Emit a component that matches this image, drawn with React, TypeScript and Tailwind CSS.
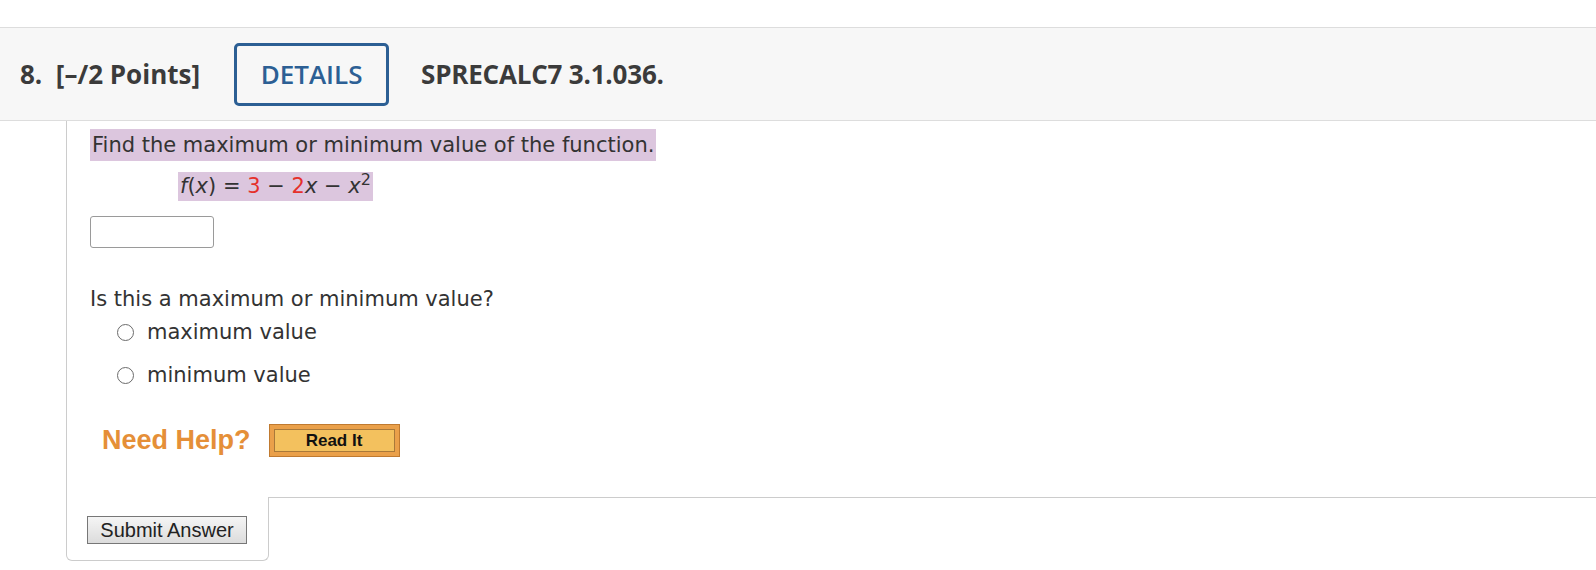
const Radio = ({ label }: { label: string }) => (
  <label className="flex h-[43px] items-center pl-[27px]">
    <span className="h-[17px] w-[17px] shrink-0 rounded-full border-[1.5px] border-[#6b6b6b] bg-white" />
    <span className="ml-[13px]">{label}</span>
  </label>
)

const App = () => {
  return (
    <div className="min-h-[570px] w-full bg-white font-['DejaVu_Sans',sans-serif] text-[21px] text-[#333333]">
      <div className="h-[27px]" />

      <div className="flex h-[94px] items-center border-y border-[#dddddd] bg-[#f7f7f7] pl-[20px] font-['Open_Sans',sans-serif] text-[26px] font-bold text-[#3b3b3b]">
        <span>8.{'\u00a0'} [–/2 Points]</span>
        <button className="ml-[34px] mr-[32px] flex h-[63px] w-[155px] items-center justify-center rounded-[5px] border-[3px] border-[#2c5f94] font-semibold text-[#2c5f94]">
          DETAILS
        </button>
        <span className="tracking-[-0.2px]">SPRECALC7 3.1.036.</span>
      </div>

      <div className="ml-[66px]">
        <div className="border-l border-[#cccccc] pb-[36px] pl-[23px] pt-[8px]">
          <div>
            <span className="inline-block bg-[#dcc6de] px-[2px] leading-[32px]">
              Find the maximum or minimum value of the function.
            </span>
          </div>
          <div className="mt-[9px] pl-[88px]">
            <span className="inline-block bg-[#dcc6de] px-[2px] leading-[29px]">
              <i>f</i>(<i>x</i>) = <span className="text-[#e5302b]">3</span> − <span className="text-[#e5302b]">2</span>
              <i>x</i> − <i>x</i>
              <sup className="text-[16px]">2</sup>
            </span>
          </div>
          <div className="mt-[14px] h-[32px] w-[124px] rounded-[3px] border border-[#9a9a9a] bg-white" />

          <div className="mt-[39px] leading-[24px]">Is this a maximum or minimum value?</div>
          <Radio label="maximum value" />
          <Radio label="minimum value" />

          <div className="mt-[23px] flex items-center pl-[12px]">
            <span className="font-['Liberation_Sans',sans-serif] text-[27px] font-bold text-[#e58f38]">Need Help?</span>
            <button className="ml-[18px] h-[33px] w-[131px] border border-[#c07a30] bg-[#eaa04a] p-[4px]">
              <span className="flex h-full w-full items-center justify-center border border-[#a9793a] bg-[#f3c15e] font-['Liberation_Sans',sans-serif] text-[17px] font-bold text-[#111111]">
                Read It
              </span>
            </button>
          </div>
        </div>

        <div className="flex">
          <div className="w-[203px] rounded-b-[6px] border-x border-b border-[#cccccc] pb-[14px] pl-[20px] pt-[18px]">
            <button className="h-[28px] w-[160px] border border-[#777777] bg-gradient-to-b from-[#f5f5f5] to-[#dcdcdc] font-['Liberation_Sans',sans-serif] text-[20px] leading-none text-[#222222]">
              Submit Answer
            </button>
          </div>
          <div className="flex-1 border-t border-[#cccccc]" />
        </div>
      </div>
    </div>
  )
}

export default App
